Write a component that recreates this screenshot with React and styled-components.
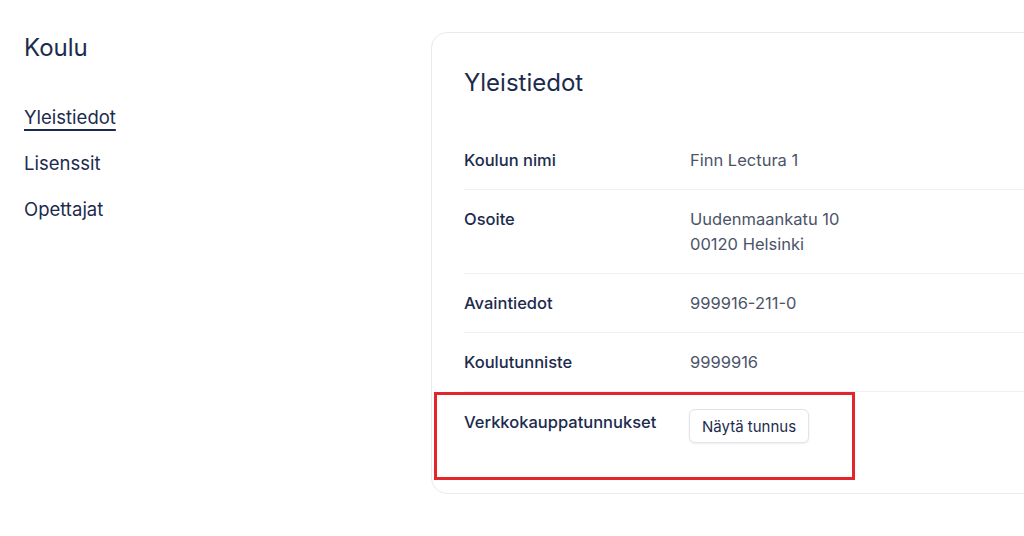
import * as React from 'react';
import styled, { createGlobalStyle } from 'styled-components';

const GlobalStyle = createGlobalStyle`
  html, body {
    margin: 0;
    padding: 0;
    background: #ffffff;
  }
  body {
    font-family: Inter, 'Noto Sans', Arial, sans-serif;
    color: #1c2b4d;
  }
`;

const SPage = styled.div`
  display: flex;
  width: 1024px;
  height: 536px;
  overflow: hidden;
`;

const SSidebar = styled.aside`
  flex: 0 0 431px;
  box-sizing: border-box;
  padding: 32px 0 0 24px;
`;

const SPageTitle = styled.h1`
  margin: 0;
  font-size: 24px;
  line-height: 32px;
  font-weight: 400;
  color: #1c2b4d;
`;

const SNav = styled.nav`
  display: flex;
  flex-direction: column;
  align-items: flex-start;
  gap: 18px;
  margin-top: 39px;
`;

const SNavLink = styled.a`
  font-size: 18.5px;
  line-height: 28px;
  color: #1c2b4d;
  text-decoration: ${({ active }) => (active ? 'underline' : 'none')};
  text-decoration-thickness: 2px;
  text-underline-offset: 5px;
  cursor: pointer;
`;

const SCard = styled.section`
  flex: 0 0 680px;
  align-self: flex-start;
  margin-top: 32px;
  box-sizing: border-box;
  padding: 34px 0 33px 32px;
  border: 1px solid #e8eaee;
  border-radius: 16px;
`;

const SCardTitle = styled.h2`
  margin: 0 0 32px;
  font-size: 24px;
  line-height: 32px;
  font-weight: 400;
  color: #1c2b4d;
`;

const SRow = styled.div`
  position: relative;
  display: flex;
  align-items: flex-start;
  padding: ${({ last }) => (last ? '17px 0' : '17px 0 16px')};
  border-bottom: ${({ last }) => (last ? 'none' : '1px solid #eef0f4')};
`;

const SLabel = styled.div`
  flex: 0 0 226px;
  font-size: 16.5px;
  line-height: 25px;
  font-weight: 500;
  color: #1c2b4d;
  padding-top: ${({ last }) => (last ? '1px' : '0')};
`;

const SValue = styled.div`
  font-size: 16.5px;
  line-height: 25px;
  color: #4b5468;
`;

const SButton = styled.button`
  height: 34px;
  padding: 0 12px;
  margin-left: -1px;
  font-family: inherit;
  font-size: 15px;
  color: #1c2b4d;
  background: #ffffff;
  border: 1px solid #e1e4ea;
  border-radius: 6px;
  box-shadow: 0 1px 2px rgba(20, 30, 60, 0.08);
  cursor: pointer;
`;

const SHighlight = styled.div`
  position: absolute;
  left: -30px;
  top: 0;
  width: 421px;
  height: 88px;
  box-sizing: border-box;
  border: 3px solid #e3262c;
  pointer-events: none;
`;

const rows = [
  { label: 'Koulun nimi', value: ['Finn Lectura 1'] },
  { label: 'Osoite', value: ['Uudenmaankatu 10', '00120 Helsinki'] },
  { label: 'Avaintiedot', value: ['999916-211-0'] },
  { label: 'Koulutunniste', value: ['9999916'] },
];

const App = () => (
  <>
    <GlobalStyle />
    <SPage>
      <SSidebar>
        <SPageTitle>Koulu</SPageTitle>
        <SNav>
          <SNavLink active>Yleistiedot</SNavLink>
          <SNavLink>Lisenssit</SNavLink>
          <SNavLink>Opettajat</SNavLink>
        </SNav>
      </SSidebar>
      <SCard>
        <SCardTitle>Yleistiedot</SCardTitle>
        {rows.map((row) => (
          <SRow key={row.label}>
            <SLabel>{row.label}</SLabel>
            <SValue>
              {row.value.map((line) => (
                <div key={line}>{line}</div>
              ))}
            </SValue>
          </SRow>
        ))}
        <SRow last>
          <SLabel last>Verkkokauppatunnukset</SLabel>
          <SButton>Näytä tunnus</SButton>
          <SHighlight />
        </SRow>
      </SCard>
    </SPage>
  </>
);

export default App;
